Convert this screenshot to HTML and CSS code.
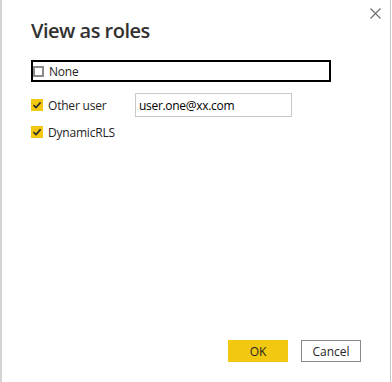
FILE: index.html
```html
<!DOCTYPE html>
<html lang="en">
<head>
  <meta charset="UTF-8">
  <meta name="viewport" content="width=device-width, initial-scale=1.0">
  <title>View as roles</title>
  <link rel="stylesheet" href="styles.css">
</head>
<body>
  <div class="dialog">
    <button type="button" class="close" aria-label="Close">
      <svg width="11" height="11" viewBox="0 0 11 11">
        <path d="M0.5 0.5 L10.5 10.5 M10.5 0.5 L0.5 10.5" stroke="#6e6e6e" stroke-width="1.1" fill="none"/>
      </svg>
    </button>

    <h1>View as roles</h1>

    <div class="roles">
      <label class="role focused">
        <span class="box"></span>
        <span class="name">None</span>
      </label>

      <div class="role">
        <label class="role-label">
          <span class="box checked">
            <svg width="12" height="12" viewBox="0 0 12 12"><path d="M2.5 6.2 L5 8.6 L9.6 3.4" stroke="#2b2b2b" stroke-width="1.6" fill="none"/></svg>
          </span>
          <span class="name">Other user</span>
        </label>
        <input type="text" class="user" value="user.one@xx.com">
      </div>

      <label class="role">
        <span class="box checked">
          <svg width="12" height="12" viewBox="0 0 12 12"><path d="M2.5 6.2 L5 8.6 L9.6 3.4" stroke="#2b2b2b" stroke-width="1.6" fill="none"/></svg>
        </span>
        <span class="name">DynamicRLS</span>
      </label>
    </div>

    <div class="actions">
      <button type="button" class="btn primary">OK</button>
      <button type="button" class="btn">Cancel</button>
    </div>
  </div>
</body>
</html>
```

FILE: styles.css
```css
html, body {
  margin: 0;
  background: #fff;
}
body {
  font-family: "Open Sans", "Noto Sans", sans-serif;
  color: #252423;
}
.dialog {
  position: relative;
  box-sizing: border-box;
  width: 391px;
  height: 382px;
  border-left: 2px solid #d4d4d4;
  border-right: 1px solid #c8c8c8;
  padding: 18px 29px 20px 29px;
  display: flex;
  flex-direction: column;
}
.close {
  position: absolute;
  top: 8px;
  right: 9px;
  width: 11px;
  height: 11px;
  padding: 0;
  border: 0;
  background: none;
  display: flex;
}
h1 {
  margin: 0;
  font-size: 20px;
  line-height: 26px;
  font-weight: 600;
  letter-spacing: -0.5px;
  color: #323130;
}
.roles {
  margin-top: 16px;
  display: flex;
  flex-direction: column;
  font-size: 12px;
  letter-spacing: -0.2px;
}
.role {
  display: flex;
  align-items: center;
  height: 22px;
}
.role + .role {
  margin-top: 4px;
}
.role.focused {
  box-sizing: border-box;
  width: 300px;
  border: 2px solid #000;
  margin-bottom: 7px;
}
.role-label {
  display: flex;
  align-items: center;
  width: 104px;
}
.role:nth-child(2) {
  height: 24px;
}
.box {
  box-sizing: border-box;
  width: 12px;
  height: 12px;
  border: 2px solid #8a8a8a;
  display: flex;
  flex-shrink: 0;
}
.focused .box {
  width: 11px;
  height: 11px;
}
.box.checked {
  border: 0;
  background: #f2c811;
}
.name {
  margin-left: 5px;
}
.user {
  box-sizing: border-box;
  width: 157px;
  height: 24px;
  border: 1px solid #c8c8c8;
  padding: 0 3px;
  font: 12px "Open Sans", "Noto Sans", sans-serif;
  letter-spacing: -0.3px;
  color: #000;
  outline: none;
}
.actions {
  margin-top: auto;
  display: flex;
  justify-content: flex-end;
  gap: 13px;
}
.btn {
  box-sizing: border-box;
  width: 60px;
  height: 22px;
  padding: 0;
  border: 1px solid #8a8a8a;
  background: #fff;
  color: #252423;
  font: 12px "Open Sans", "Noto Sans", sans-serif;
}
.btn.primary {
  border-color: #f2c811;
  background: #f2c811;
}
```
